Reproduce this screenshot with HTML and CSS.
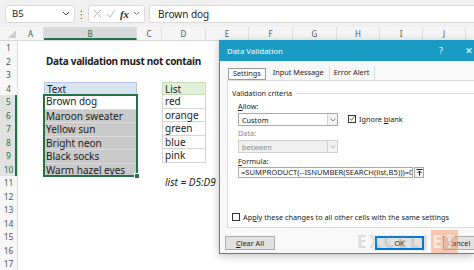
FILE: index.html
```html
<!DOCTYPE html>
<html>

<head>
  <meta charset="utf-8">
  <title>Data validation must not contain</title>
  <link rel="stylesheet" href="styles.css">
</head>

<body>
  <div class="formula-bar">
    <div class="name-box">
      <span>B5</span>
      <svg width="8" height="5" viewBox="0 0 8 5"><polyline points="1,1 4,4 7,1" fill="none" stroke="#444" stroke-width="1"/></svg>
    </div>
    <span class="grip">&#8942;</span>
    <div class="fx-box">
      <svg width="9" height="9" viewBox="0 0 9 9"><path d="M1 1L8 8M8 1L1 8" stroke="#b8b8b8" stroke-width="1"/></svg>
      <svg width="10" height="9" viewBox="0 0 10 9"><polyline points="1,5 4,8 9,1" fill="none" stroke="#b8b8b8" stroke-width="1"/></svg>
      <i class="fx">fx</i>
      <svg width="7" height="5" viewBox="0 0 7 5"><polyline points="1,1 3.5,3.5 6,1" fill="none" stroke="#777" stroke-width="1"/></svg>
    </div>
    <div class="formula-input">Brown dog</div>
  </div>

  <div class="sheet">
    <div class="corner">
      <svg width="8" height="8" viewBox="0 0 8 8"><polygon points="8,0 8,8 0,8" fill="#d0d0d0"/></svg>
    </div>
    <div class="col-heads">
      <span class="w-a">A</span>
      <span class="w-b current">B</span>
      <span class="w-c">C</span>
      <span class="w-d">D</span>
      <span class="w-e">E</span>
      <span class="w-f">F</span>
      <span class="w-f">G</span>
      <span class="w-e">H</span>
      <span class="w-e">I</span>
      <span class="w-e">J</span>
      <span class="w-rest"></span>
    </div>
    <div class="row-heads">
      <span>1</span>
      <span>2</span>
      <span>3</span>
      <span>4</span>
      <span class="current">5</span>
      <span class="current">6</span>
      <span class="current">7</span>
      <span class="current">8</span>
      <span class="current">9</span>
      <span class="current">10</span>
      <span>11</span>
      <span>12</span>
      <span>13</span>
      <span>14</span>
      <span>15</span>
      <span>16</span>
      <span>17</span>
    </div>
    <div class="cells">
      <div class="col w-a"></div>
      <div class="col w-b">
        <div class="cell"></div>
        <div class="cell title">Data validation must not contain</div>
        <div class="cell"></div>
        <div class="cell text-head">Text</div>
        <div class="selection">
          <div class="cell active">Brown dog</div>
          <div class="cell shaded">Maroon sweater</div>
          <div class="cell shaded">Yellow sun</div>
          <div class="cell shaded">Bright neon</div>
          <div class="cell shaded">Black socks</div>
          <div class="cell shaded">Warm hazel eyes</div>
        </div>
      </div>
      <div class="col w-c"></div>
      <div class="col w-d">
        <div class="cell"></div>
        <div class="cell"></div>
        <div class="cell"></div>
        <div class="cell list-head">List</div>
        <div class="cell list-item">red</div>
        <div class="cell list-item">orange</div>
        <div class="cell list-item">green</div>
        <div class="cell list-item">blue</div>
        <div class="cell list-item">pink</div>
        <div class="cell"></div>
        <div class="cell note">list = D5:D9</div>
      </div>
    </div>
  </div>

  <div class="dialog">
    <div class="dlg-title">
      <span class="dlg-name">Data Validation</span>
      <span class="dlg-btn">?</span>
      <span class="dlg-btn close">&#10005;</span>
    </div>
    <div class="tabs">
      <span class="tab selected">Settings</span>
      <span class="tab">Input Message</span>
      <span class="tab">Error Alert</span>
    </div>
    <div class="tab-page">
      <div class="group-label"><span>Validation criteria</span></div>
      <div class="criteria">
        <div class="label"><u>A</u>llow:</div>
        <div class="allow-row">
          <div class="select">
            <span>Custom</span>
            <span class="arrow"><svg width="6" height="4" viewBox="0 0 6 4"><polyline points="0.5,0.5 3,3 5.5,0.5" fill="none" stroke="#666" stroke-width="0.8"/></svg></span>
          </div>
          <div class="check">
            <span class="box"><svg width="7" height="7" viewBox="0 0 7 7"><polyline points="1,3.5 3,5.5 6.2,1.2" fill="none" stroke="#333" stroke-width="0.9"/></svg></span>
            <span>Ignore <u>b</u>lank</span>
          </div>
        </div>
        <div class="label disabled">Data:</div>
        <div class="select disabled">
          <span>between</span>
          <span class="arrow"><svg width="6" height="4" viewBox="0 0 6 4"><polyline points="0.5,0.5 3,3 5.5,0.5" fill="none" stroke="#999" stroke-width="0.8"/></svg></span>
        </div>
        <div class="label"><u>F</u>ormula:</div>
        <div class="formula-row">
          <div class="ref-input">=SUMPRODUCT(--ISNUMBER(SEARCH(list,B5)))=0</div>
          <span class="ref-btn"><svg width="7" height="7" viewBox="0 0 7 7"><path d="M0.5 0.5H6.5M3.5 2V6.5M1.5 4L3.5 2L5.5 4" fill="none" stroke="#222" stroke-width="1"/></svg></span>
        </div>
      </div>
      <div class="check apply">
        <span class="box"></span>
        <span>Ap<u>p</u>ly these changes to all other cells with the same settings</span>
      </div>
    </div>
    <div class="buttons">
      <span class="btn"><u>C</u>lear All</span>
      <span class="btn ok">OK</span>
      <span class="btn cancel">Cancel</span>
    </div>
    <div class="watermark">EXCELJ<span>ET</span></div>
  </div>
</body>

</html>
```

FILE: styles.css
```css
body {
  margin: 0;
  width: 474px;
  height: 270px;
  overflow: hidden;
  position: relative;
  background: #fff;
  font-family: 'Noto Sans', 'DejaVu Sans', sans-serif;
  color: #222;
}

/* Formula bar */

.formula-bar {
  display: flex;
  align-items: center;
  height: 27px;
  padding-left: 5px;
  background: #f0f0f0;
  box-sizing: border-box;
}

.name-box,
.fx-box,
.formula-input {
  height: 18px;
  box-sizing: border-box;
  background: #fff;
  border: 1px solid #dadada;
  border-radius: 3px;
  display: flex;
  align-items: center;
}

.name-box {
  width: 70px;
  justify-content: space-between;
  padding: 0 4px 0 6px;
  font-size: 9.5px;
}

.grip {
  width: 13px;
  text-align: center;
  font-size: 10px;
  color: #555;
}

.fx-box {
  width: 57px;
  justify-content: space-around;
  padding: 0 2px;
}

.fx {
  font-family: 'Liberation Serif', serif;
  font-size: 11px;
  font-weight: bold;
  color: #333;
}

.formula-input {
  flex: 1;
  margin-left: 4px;
  padding-left: 8px;
  border-right: none;
  border-radius: 3px 0 0 3px;
  font-size: 10px;
}

/* Sheet */

.sheet {
  display: grid;
  grid-template-columns: 18px 1fr;
  grid-template-rows: 14px 1fr;
}

.corner {
  display: flex;
  align-items: flex-end;
  justify-content: flex-end;
  padding: 0 2px 2px 0;
  background: #f5f5f5;
  border-bottom: 1px solid #d8d8d8;
  box-sizing: border-box;
}

.col-heads {
  display: flex;
  background: #f5f5f5;
  border-bottom: 1px solid #d8d8d8;
  box-sizing: border-box;
}

.col-heads span {
  box-sizing: border-box;
  border-right: 1px solid #dedede;
  text-align: center;
  font-size: 8px;
  line-height: 13px;
  color: #555;
}

.col-heads .current {
  background: #d9d9d9;
  border-bottom: 2px solid #217346;
  color: #217346;
}

.col-heads .w-rest {
  flex: 1;
  border-right: none;
}

.w-a { width: 26px; }
.w-b { width: 93px; }
.w-c { width: 25px; }
.w-d { width: 44px; }
.w-e { width: 43px; }
.w-f { width: 44px; }

.row-heads {
  display: flex;
  flex-direction: column;
  background: #f7f7f7;
  border-right: 1px solid #dedede;
}

.row-heads span {
  height: 13.5px;
  line-height: 13.5px;
  text-align: center;
  font-size: 8.5px;
  color: #555;
}

.row-heads .current {
  background: #e1e1e1;
  color: #217346;
  box-shadow: inset -2px 0 0 #217346;
}

.cells {
  display: flex;
}

.col {
  display: flex;
  flex-direction: column;
}

.cell {
  height: 13.5px;
  box-sizing: border-box;
  padding-left: 2px;
  font-size: 10px;
  line-height: 13px;
  white-space: nowrap;
}

.title {
  font-weight: bold;
  letter-spacing: -0.3px;
}

.text-head {
  background: #dae3f1;
  border: 1px solid #b9c8e0;
  border-bottom: none;
}

.selection {
  position: relative;
  outline: 2px solid #217346;
  outline-offset: -1px;
}

/* fill handle of the selection */
.selection::after {
  content: '';
  position: absolute;
  right: -3px;
  bottom: -3px;
  width: 4px;
  height: 4px;
  background: #217346;
  border: 1px solid #fff;
}

.shaded {
  background: #c9c9c9;
  border-top: 1px solid #dcdcdc;
}

.list-head {
  background: #e2efda;
  border: 1px solid #c6dcb9;
}

.list-item {
  border: 1px solid #d4d4d4;
  border-top: none;
}

.note {
  font-style: italic;
  padding-left: 3px;
}

/* Data validation dialog */

.dialog {
  position: absolute;
  left: 219px;
  top: 40px;
  width: 255px;
  height: 214px;
  box-sizing: border-box;
  display: flex;
  flex-direction: column;
  overflow: hidden;
  background: #f8f8f8;
  border-left: 1px solid #1a9bc4;
  border-bottom: 1px solid #1a9bc4;
  box-shadow: 0 2px 8px rgba(0, 0, 0, 0.25);
  font-size: 7.3px;
  color: #222;
}

.dlg-title {
  display: flex;
  align-items: center;
  height: 21px;
  flex-shrink: 0;
  padding-left: 7px;
  background: #1a9bc4;
  color: #fff;
  font-size: 7.8px;
}

.dlg-name {
  flex: 1;
}

.dlg-btn {
  width: 12px;
  text-align: center;
  font-size: 9px;
}

.dlg-btn.close {
  margin: 0 -1px 0 16px;
}

.tabs {
  display: flex;
  height: 14px;
  margin: 5px 0 0 8px;
}

.tab {
  padding: 0 5px 0 4px;
  line-height: 13px;
  border-right: 1px solid #dcdcdc;
  white-space: nowrap;
}

.tab.selected {
  margin: 2px 3px 0 0;
  padding: 0 4px;
  line-height: 9px;
  border: 1px solid #9a9a9a;
  background: #fff;
}

.tab-page {
  margin-left: 7px;
  height: 148px;
  flex-shrink: 0;
  box-sizing: border-box;
  padding: 6px 0 0 4px;
  background: #fff;
  border: 1px solid #dcdcdc;
  border-right: none;
  display: flex;
  flex-direction: column;
}

.group-label {
  display: flex;
  align-items: center;
  height: 12px;
}

.group-label::after {
  content: '';
  flex: 1;
  margin-left: 4px;
  border-top: 1px solid #dcdcdc;
}

.criteria {
  padding-left: 6px;
  display: flex;
  flex-direction: column;
  align-items: flex-start;
}

.label {
  height: 11px;
  line-height: 11px;
  margin-top: 2px;
}

.label.disabled {
  color: #8a8a8a;
}

.select + .label {
  margin-top: 3px;
}

.allow-row {
  display: flex;
  align-items: center;
  margin-top: 1px;
}

.select {
  width: 100px;
  height: 13px;
  margin-top: 1px;
  box-sizing: border-box;
  display: flex;
  align-items: center;
  justify-content: space-between;
  padding-left: 3px;
  border: 1px solid #a8a8a8;
  background: #fff;
  color: #111;
}

.allow-row .select {
  margin-top: 0;
}

.select.disabled {
  background: #f0f0f0;
  border-color: #cfcfcf;
  color: #8a8a8a;
}

.arrow {
  width: 9px;
  height: 11px;
  display: flex;
  align-items: center;
  justify-content: center;
  border-left: 1px solid #d0d0d0;
  background: #f3f3f3;
}

.check {
  display: flex;
  align-items: center;
  gap: 3px;
}

.allow-row .check {
  margin-left: 10px;
  margin-top: -2px;
}

.box {
  width: 8px;
  height: 8px;
  box-sizing: border-box;
  border: 1px solid #333;
  background: #fff;
  display: flex;
  align-items: center;
  justify-content: center;
}

.formula-row {
  display: flex;
  align-items: center;
  gap: 1px;
}

.ref-input {
  width: 175px;
  height: 11px;
  box-sizing: border-box;
  overflow: hidden;
  white-space: nowrap;
  padding-left: 2px;
  line-height: 9px;
  border: 1px solid #a8a8a8;
  background: #fff;
  font-size: 7.6px;
}

.ref-btn {
  width: 10px;
  height: 11px;
  box-sizing: border-box;
  border: 1px solid #a8a8a8;
  background: #f3f3f3;
  display: flex;
  align-items: center;
  justify-content: center;
}

.apply {
  margin-top: auto;
  margin-bottom: 5px;
}

.buttons {
  display: flex;
  margin: 8px 0 0 5px;
}

.btn {
  width: 50px;
  height: 14px;
  flex-shrink: 0;
  box-sizing: border-box;
  line-height: 12px;
  text-align: center;
  border: 1px solid #adadad;
  background: #e1e1e1;
}

.btn.ok {
  width: 49px;
  margin: 0 19px 0 100px;
  border: 2px solid #0078d7;
  line-height: 10px;
}

.btn.cancel {
  width: 31px;
  border-right: none;
}

.watermark {
  position: absolute;
  left: 137px;
  bottom: 0;
  font-size: 17px;
  font-weight: bold;
  letter-spacing: 3px;
  color: rgba(150, 150, 150, 0.3);
  pointer-events: none;
}

.watermark span {
  color: rgba(255, 255, 255, 0.6);
  background: rgba(240, 130, 70, 0.4);
  padding: 0 1px;
}
```
